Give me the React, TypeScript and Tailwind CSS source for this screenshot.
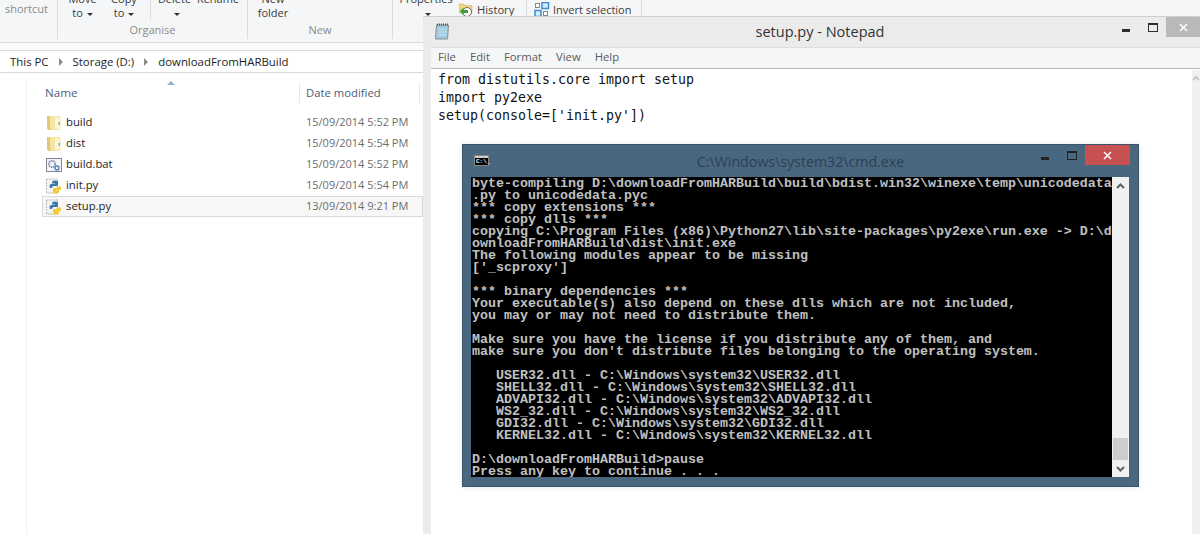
const consoleLines = [
  "byte-compiling D:\\downloadFromHARBuild\\build\\bdist.win32\\winexe\\temp\\unicodedata",
  ".py to unicodedata.pyc",
  "*** copy extensions ***",
  "*** copy dlls ***",
  "copying C:\\Program Files (x86)\\Python27\\lib\\site-packages\\py2exe\\run.exe -> D:\\d",
  "ownloadFromHARBuild\\dist\\init.exe",
  "The following modules appear to be missing",
  "['_scproxy']",
  "",
  "*** binary dependencies ***",
  "Your executable(s) also depend on these dlls which are not included,",
  "you may or may not need to distribute them.",
  "",
  "Make sure you have the license if you distribute any of them, and",
  "make sure you don't distribute files belonging to the operating system.",
  "",
  "   USER32.dll - C:\\Windows\\system32\\USER32.dll",
  "   SHELL32.dll - C:\\Windows\\system32\\SHELL32.dll",
  "   ADVAPI32.dll - C:\\Windows\\system32\\ADVAPI32.dll",
  "   WS2_32.dll - C:\\Windows\\system32\\WS2_32.dll",
  "   GDI32.dll - C:\\Windows\\system32\\GDI32.dll",
  "   KERNEL32.dll - C:\\Windows\\system32\\KERNEL32.dll",
  "",
  "D:\\downloadFromHARBuild>pause",
  "Press any key to continue . . .",
];

const files = [
  { name: "build", date: "15/09/2014 5:52 PM", kind: "folder" },
  { name: "dist", date: "15/09/2014 5:54 PM", kind: "folder" },
  { name: "build.bat", date: "15/09/2014 5:52 PM", kind: "bat" },
  { name: "init.py", date: "15/09/2014 5:54 PM", kind: "py" },
  { name: "setup.py", date: "13/09/2014 9:21 PM", kind: "py", hover: true },
];

function FileIcon({ kind }: { kind: string }) {
  if (kind === "folder") {
    return (
      <svg width="16" height="16" viewBox="0 0 16 16">
        <path d="M1 1h4l1 1v13H2.500L1 13.500z" fill="#e3c873" />
        <path d="M4 1h9.500l1 1v12l-1 1H6l-2-1z" fill="#f5e5a4" />
        <path d="M9 2.500h4.500V14H9z" fill="#fdf6d4" />
        <rect x="12.500" y="7" width="1.500" height="3" fill="#6fb0dc" />
      </svg>
    );
  }
  if (kind === "bat") {
    return (
      <svg width="16" height="16" viewBox="0 0 16 16">
        <rect x="0.500" y="1.500" width="15" height="13" fill="#f3f5f8" stroke="#7e8794" />
        <circle cx="6" cy="7" r="3.200" fill="none" stroke="#6d87a8" strokeWidth="1.600" strokeDasharray="1.500 0.800" />
        <circle cx="11" cy="11" r="2" fill="none" stroke="#4a7fb8" strokeWidth="1.300" />
      </svg>
    );
  }
  return (
    <svg width="16" height="16" viewBox="0 0 16 16">
      <path d="M0.500 1h11v14h-11z" fill="#f4f4f4" stroke="#b5b5b5" strokeDasharray="2 1" />
      <path d="M6 4.500q0-2 3-2t3 2v2.500q0 1-1 1H8q-2 0-2 2H4.500Q3.500 10 3.500 8t2-2H9V5.500H6z" fill="#3a77a8" />
      <path d="M14 8q1 0 1 2t-1.500 2.500H10V13h3v.5q0 2-3 2t-3-2V11q0-1 1-1h3q2 0 2-2z" fill="#f5c92f" />
    </svg>
  );
}

function Caret() {
  return <span className="ml-1 inline-block h-0 w-0 border-x-[3px] border-t-[3px] border-x-transparent border-t-[#333] align-middle" />;
}

function RibbonButton({ top, bottom, caret, width }: { top: string; bottom?: string; caret?: boolean; width: string }) {
  return (
    <div className={`${width} flex shrink-0 flex-col items-center text-[11px] leading-[14px] text-[#3b3b3b]`}>
      <span>{top}</span>
      <span className="h-[14px]">
        {bottom}
        {caret && <Caret />}
      </span>
    </div>
  );
}

function RibbonGroup({ label, width, children }: { label: string; width: string; children?: React.ReactNode }) {
  return (
    <div className={`${width} flex h-[39px] shrink-0 flex-col border-r border-[#dadbdc]`}>
      <div className="flex h-[20px] items-end">{children}</div>
      <div className="mt-auto pb-[1px] text-center text-[11px] leading-[16px] text-[#8a8a8a]">{label}</div>
    </div>
  );
}

function Ribbon() {
  return (
    <div className="flex h-[43px] w-full shrink-0 items-start overflow-hidden border-b border-[#dadbdc] bg-[#f5f6f7]">
      <div className="h-[39px] w-[58px] shrink-0 border-r border-[#dadbdc] pl-[5px] pt-[1px] text-[11px] leading-[16px] text-[#8a8a8a]">
        shortcut
      </div>
      <RibbonGroup label="Organise" width="w-[190px]">
        <div className="flex h-[20px] items-end pl-[4px]">
          <RibbonButton top="Move" bottom="to" caret width="w-[41px]" />
          <RibbonButton top="Copy" bottom="to" caret width="w-[42px]" />
          <div className="ml-[5px] flex border-l border-[#dadbdc]">
            <RibbonButton top="Delete" caret width="w-[47px]" />
            <RibbonButton top="Rename" width="w-[40px]" />
          </div>
        </div>
      </RibbonGroup>
      <RibbonGroup label="New" width="w-[145px]">
        <RibbonButton top="New" bottom="folder" width="w-[50px]" />
      </RibbonGroup>
      <div className="flex h-[20px] w-[66px] shrink-0 items-end">
        <RibbonButton top="Properties" caret width="w-[66px]" />
      </div>
      <div className="flex h-[39px] w-[68px] shrink-0 items-start gap-[2px] border-r border-[#dadbdc] pt-[2px] text-[11.200px] leading-[16px] text-[#3b3b3b]">
        <svg width="16" height="15" viewBox="0 0 16 15" className="shrink-0">
          <path d="M0 2h5l1 1.500h7V11H0z" fill="#f3d67e" stroke="#c9a548" strokeWidth="0.500" />
          <circle cx="8" cy="10" r="4.500" fill="#fff" stroke="#666" />
          <path d="M1 9l3.500-3.500V8H9v3H4.500v2.500z" fill="#3ea03a" />
        </svg>
        <span>History</span>
      </div>
      <div className="flex h-[39px] w-[115px] shrink-0 items-start gap-[3px] whitespace-nowrap border-r border-[#dadbdc] pl-[7px] pt-[2px] text-[11px] leading-[16px] text-[#3b3b3b]">
        <svg width="16" height="15" viewBox="0 0 16 15" className="shrink-0">
          <rect x="1.500" y="1.500" width="4" height="4" fill="#fff" stroke="#7d8a99" />
          <rect x="8" y="0.500" width="6.500" height="6" fill="#d6ebfb" stroke="#3e89d0" strokeWidth="1.500" />
          <rect x="1" y="8.500" width="6" height="6" fill="#d6ebfb" stroke="#3e89d0" strokeWidth="1.500" />
          <rect x="9.500" y="9.500" width="4" height="4" fill="#fff" stroke="#7d8a99" />
        </svg>
        <span>Invert selection</span>
      </div>
    </div>
  );
}

function Explorer() {
  return (
    <div className="flex min-h-0 w-[423px] flex-1 flex-col bg-white">
      <div className="h-[7px] shrink-0 bg-[#fafafa]" />
      <div className="flex h-[23px] shrink-0 items-center gap-[10px] border-y border-[#d9d9d9] bg-white pl-[10px] text-[11.400px] text-[#1e1e1e]">
        <span>This PC</span>
        <span className="h-0 w-0 border-y-[4px] border-l-[4px] border-y-transparent border-l-[#8a8a8a]" />
        <span>Storage (D:)</span>
        <span className="h-0 w-0 border-y-[4px] border-l-[4px] border-y-transparent border-l-[#8a8a8a]" />
        <span>downloadFromHARBuild</span>
      </div>
      <div className="ml-[26px] mt-[7px] flex min-h-0 w-[397px] flex-1 flex-col border-l border-[#f0f0f0]">
        <div className="relative flex h-[24px] shrink-0 items-end pb-[1px] text-[11.300px] leading-[20px] text-[#4c607a]">
          <span className="h-[20px] w-[273px] border-r border-[#e8e8e8] pl-[18px] text-[11.600px]">Name</span>
          <span className="h-[20px] w-[120px] border-r border-[#e8e8e8] pl-[6px]">Date modified</span>
          <span className="absolute left-[140px] top-[1px] h-0 w-0 border-x-[4px] border-b-[4px] border-x-transparent border-b-[#8fb4cf]" />
        </div>
        <div className="mt-[8px] flex flex-col pl-[15px]">
          {files.map((f) => (
            <div
              key={f.name}
              className={`flex h-[21px] items-center whitespace-nowrap border text-[11.300px] ${
                f.hover ? "border-[#d9d9d9] bg-[#f7f7f7]" : "border-transparent"
              }`}
            >
              <span className="ml-[3px] flex w-[20px] shrink-0 items-center">
                <FileIcon kind={f.kind} />
              </span>
              <span className="w-[240px] shrink-0 text-[#1e1e1e]">{f.name}</span>
              <span className="text-[11px] text-[#6d6d6d]">{f.date}</span>
            </div>
          ))}
        </div>
      </div>
    </div>
  );
}

function Notepad() {
  return (
    <div className="absolute left-[423px] top-[16px] flex h-[518px] w-[777px] flex-col border-t border-[#cfcfcf] bg-[#ebebeb]">
      <div className="relative flex h-[30px] shrink-0 items-center justify-center pl-[17px] text-[14.500px] text-[#333]">
        <svg className="absolute left-[10px] top-[5px]" width="18" height="19" viewBox="0 0 18 19">
          <path d="M3.500 3h12l-1 14H2.500z" fill="#9ecbe2" stroke="#8a8f8a" />
          <path d="M5 7h9M5 10h9M4.500 13h9" stroke="#c9e4f2" />
          <path d="M4 2.500h11" stroke="#555" strokeDasharray="1 1" strokeWidth="2" />
        </svg>
        <span>setup.py - Notepad</span>
        <span className="absolute right-[70px] top-[12px] h-[3px] w-[8px] bg-[#2c2c2c]" />
        <span className="absolute right-[42px] top-[6px] h-[9px] w-[10px] border border-t-[2px] border-[#2c2c2c]" />
        <span className="absolute right-0 top-0 flex h-[20px] w-[34px] items-center justify-center bg-[#b9b9b9]">
          <svg width="9" height="9" viewBox="0 0 9 9"><path d="M1 1l7 7M8 1L1 8" stroke="#fff" strokeWidth="1.500" /></svg>
        </span>
      </div>
      <div className="ml-[8px] flex h-[21px] shrink-0 items-center gap-[14px] border-t border-[#dcdcdc] bg-[#f5f6f7] pb-[2px] pl-[7px] text-[11.300px] text-[#5b5b5b]">
        <span>File</span>
        <span>Edit</span>
        <span>Format</span>
        <span>View</span>
        <span>Help</span>
      </div>
      <div className="relative ml-[8px] min-h-0 flex-1 border-t border-[#b9b9b9] bg-white">
        <div className="absolute bottom-0 right-0 top-[1px] w-[8px] bg-[#f0f0f0]">
          <svg className="mt-[5px]" width="8" height="6" viewBox="0 0 8 6"><path d="M1 5l3-3 3 3" fill="none" stroke="#c8c8c8" strokeWidth="2" /></svg>
        </div>
        <pre className="pl-[7px] pt-[2px] font-['DejaVu_Sans_Mono',monospace] text-[13.290px] leading-[18px] text-[#111]">
          {"from distutils.core import setup\nimport py2exe\nsetup(console=['init.py'])"}
        </pre>
      </div>
    </div>
  );
}

function Cmd() {
  return (
    <div className="absolute left-[462px] top-[144px] flex h-[343px] w-[677px] flex-col border border-[#39536a] bg-[#4a6780] shadow-[0_0_6px_rgba(0,0,0,0.1)]">
      <div className="relative flex h-[32px] shrink-0 items-center justify-center text-[14.200px] text-[#2c4054]">
        <span className="absolute left-[11px] top-[10px] flex h-[11px] w-[15px] flex-col border border-[#888] bg-black">
          <span className="h-[2px] bg-[#ccc]" />
          <span className="pl-[1px] font-['Liberation_Mono',monospace] text-[6px] font-bold leading-[7px] text-white">C:\_</span>
        </span>
        <span className="pt-[1px]">C:\Windows\system32\cmd.exe</span>
        <span className="absolute right-[89px] top-[12px] h-[3px] w-[8px] bg-[#222]" />
        <span className="absolute right-[61px] top-[6px] h-[9px] w-[10px] border border-t-[2px] border-[#222]" />
        <span className="absolute right-[8px] top-0 flex h-[20px] w-[45px] items-center justify-center bg-[#c75050]">
          <svg width="9" height="9" viewBox="0 0 9 9"><path d="M1 1l7 7M8 1L1 8" stroke="#fff" strokeWidth="1.500" /></svg>
        </span>
      </div>
      <div className="ml-[8px] mr-[9px] flex h-[300px] shrink-0">
        <pre className="h-full w-[641px] overflow-hidden bg-black pl-[1px] pt-[1px] font-['Liberation_Mono',monospace] text-[13.330px] font-bold leading-[12px] text-[#c0c0c0]">
          {consoleLines.join("\n")}
        </pre>
        <div className="flex h-full w-[17px] flex-col items-center bg-[#f0f0f0]">
          <svg className="mt-[5px]" width="9" height="8" viewBox="0 0 9 8"><path d="M1 6l3.500-3.500L8 6" fill="none" stroke="#606060" strokeWidth="2" /></svg>
          <div className="mt-auto h-[22px] w-[15px] bg-[#cdcdcd]" />
          <div className="flex h-[17px] items-center">
            <svg width="9" height="8" viewBox="0 0 9 8"><path d="M1 2l3.500 3.500L8 2" fill="none" stroke="#606060" strokeWidth="2" /></svg>
          </div>
        </div>
      </div>
    </div>
  );
}

export default function App() {
  return (
    <div className="relative h-[534px] w-[1200px] overflow-hidden bg-white font-['Open_Sans',sans-serif]">
      <div className="flex h-full flex-col">
        <Ribbon />
        <Explorer />
      </div>
      <Notepad />
      <Cmd />
    </div>
  );
}
